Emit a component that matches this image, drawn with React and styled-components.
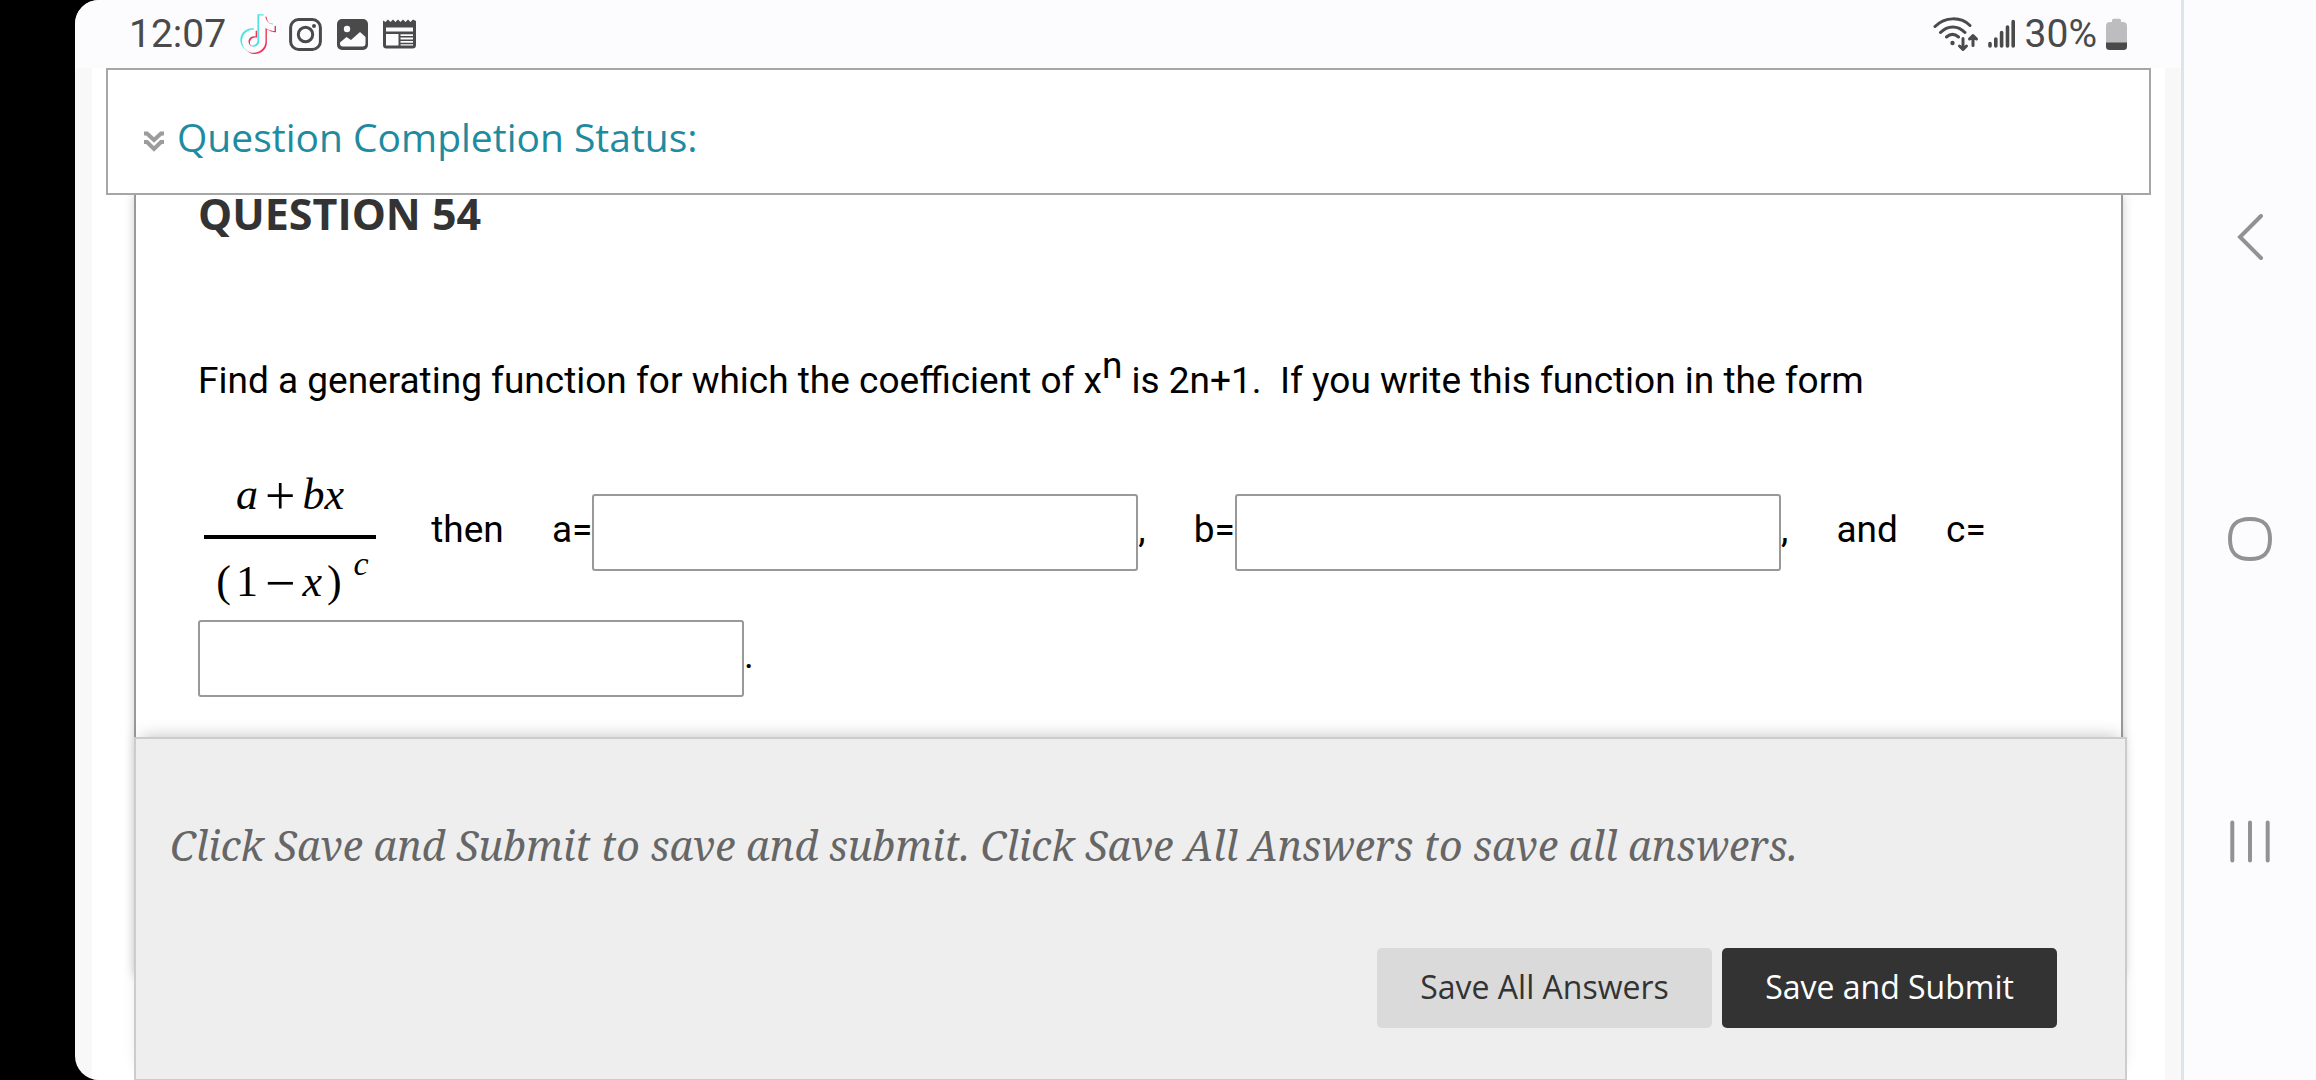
import React from "react";
import styled, { createGlobalStyle } from "styled-components";

const GlobalStyle = createGlobalStyle`
  *, *::before, *::after { box-sizing: border-box; }
  html, body { margin: 0; background: #000; }
  body { font-family: Roboto, "Liberation Sans", sans-serif; overflow: hidden; }
`;

const Device = styled.div`
  display: flex;
  height: 100vh;
  padding-left: 75px;
  background: #000;
  overflow: hidden;
`;

const Screen = styled.div`
  flex: 1;
  min-width: 0;
  display: flex;
  flex-direction: column;
  background: #f8f8f8;
  border-radius: 24px 0 0 24px;
  overflow: hidden;
`;

const StatusBar = styled.header`
  flex: none;
  display: flex;
  justify-content: space-between;
  align-items: center;
  height: 68px;
  padding: 0 54px;
  background: #fcfcff;
  color: #4a4a4a;
  font-size: 39px;
  line-height: 68px;
`;

const StatusGroup = styled.div`
  display: flex;
  align-items: center;
  gap: ${(p) => p.$gap}px;
`;

const Page = styled.main`
  flex: 1;
  min-height: 0;
  margin: 0 16px 0 17px;
  padding: 0 14px;
  background: #fff;
`;

const CompletionPanel = styled.section`
  position: relative;
  z-index: 1;
  display: flex;
  align-items: center;
  gap: 13px;
  height: 127px;
  padding: 10px 36px 0;
  background: #fff;
  border: 2px solid #a6a6a6;
`;

const CompletionLink = styled.a`
  color: #1f8ba0;
  font: 39px/54px "Open Sans", "Noto Sans", sans-serif;
  text-decoration: none;
`;

const QuestionCard = styled.section`
  height: 780px;
  margin: 0 28px;
  padding: 0 62px;
  background: #fff;
  border: solid #999;
  border-width: 0 2px;
  box-shadow: 0 0 10px rgba(0, 0, 0, 0.2);
`;

const QuestionTitle = styled.h1`
  margin: 0;
  color: #333;
  font: bold 43px/38px "Open Sans", "Noto Sans", sans-serif;
`;

const Prompt = styled.p`
  margin: 118px 0 0;
  color: #000;
  font-size: 37px;
  line-height: 60px;

  sup {
    font-size: 37px;
    line-height: 0;
    vertical-align: 15px;
  }
`;

const AnswerLine = styled.div`
  margin-top: 33px;
  font-size: 37px;
  line-height: 42px;
`;

const Word = styled.span`
  margin-right: 39px;
`;

const AnswerInput = styled.input`
  width: 546px;
  height: 77px;
  margin: 0;
  padding: 0 12px;
  background: #fff;
  border: 2px solid #999;
  border-radius: 3px;
  font: 28px Roboto, "Liberation Sans", sans-serif;
`;

const Fraction = styled.span`
  display: inline-flex;
  flex-direction: column;
  align-items: stretch;
  width: 172px;
  margin: 27px 46px 14px 6px;
  vertical-align: middle;
  font: 44px/48px "Liberation Serif", serif;
  text-align: center;
`;

const Numerator = styled.span`
  padding-bottom: 16px;
  border-bottom: 4px solid #000;
`;

const Denominator = styled.span`
  padding-top: 19px;

  sup {
    margin-left: 7px;
    font-size: 34px;
    line-height: 0;
    vertical-align: 21px;
  }
`;

const Operator = styled.span`
  margin: 0 7px;
  font-size: 54px;
  line-height: 0;
  vertical-align: -5px;
`;

const Group = styled.span`
  display: inline-block;
  padding: 0 5px;

  &::before {
    content: "(";
    margin-right: 5px;
  }

  &::after {
    content: ")";
    margin-left: 5px;
  }
`;

const SubmitPanel = styled.footer`
  position: relative;
  height: 344px;
  margin: -238px 24px 0 28px;
  padding: 78px 68px 0 34px;
  background: #eee;
  border: 2px solid #ccc;
  box-shadow: 0 -8px 16px -8px rgba(0, 0, 0, 0.25);
`;

const Hint = styled.p`
  margin: 0;
  color: #666;
  font: italic 41px/56px "Noto Serif", "DejaVu Serif Condensed", "DejaVu Serif", serif;
  white-space: nowrap;
`;

const Actions = styled.div`
  display: flex;
  justify-content: flex-end;
  gap: 10px;
  margin-top: 75px;
`;

const ActionButton = styled.button`
  width: 335px;
  height: 80px;
  padding: 0 0 4px;
  border: 0;
  border-radius: 5px;
  background: ${(p) => (p.$primary ? "#333" : "#dadada")};
  color: ${(p) => (p.$primary ? "#fff" : "#333")};
  font: 32px "Open Sans", "Noto Sans", sans-serif;
`;

const NavBar = styled.nav`
  flex: none;
  display: flex;
  flex-direction: column;
  width: 135px;
  padding: 86px 0 88px;
  background: #fcfcff;
  border-left: 3px solid #dde4ea;
`;

const NavButton = styled.button`
  flex: 1;
  display: flex;
  align-items: center;
  justify-content: center;
  padding: 0;
  background: none;
  border: 0;
`;

const NOTE =
  "M12.525.02c1.31-.02 2.61-.01 3.91-.02.08 1.53.63 3.09 1.75 4.17 1.12 1.11 2.7 1.62 4.24 1.79v4.03c-1.44-.05-2.89-.35-4.2-.97-.57-.26-1.1-.59-1.62-.93-.01 2.92.01 5.84-.02 8.75-.08 1.4-.54 2.79-1.35 3.94-1.31 1.92-3.58 3.17-5.91 3.21-1.43.08-2.86-.31-4.08-1.03-2.02-1.19-3.44-3.37-3.65-5.71-.02-.5-.03-1-.01-1.49.18-1.9 1.12-3.72 2.58-4.96 1.66-1.44 3.98-2.13 6.15-1.72.02 1.48-.04 2.96-.04 4.44-.99-.32-2.15-.23-3.02.37-.63.41-1.11 1.04-1.36 1.75-.21.51-.15 1.07-.14 1.61.24 1.64 1.82 3.02 3.5 2.87 1.12-.01 2.19-.66 2.77-1.61.19-.33.4-.67.41-1.06.1-1.79.06-3.57.07-5.36.01-4.03-.01-8.05.02-12.07z";

const TikTokIcon = () => (
  <svg width="33" height="40" viewBox="0 0 33 40" overflow="visible" aria-hidden="true">
    <g transform="scale(1.56)">
      <path d={NOTE} fill="#4fe3e3" transform="translate(-2 0.1)" />
      <path d={NOTE} fill="#e8365a" transform="translate(0 1.7)" />
      <path d={NOTE} fill="#fcfcff" transform="translate(-0.9 0.9)" />
    </g>
  </svg>
);

const InstagramIcon = () => (
  <svg width="33" height="33" viewBox="0 0 33 33" fill="none" stroke="#4a4a4a" aria-hidden="true">
    <rect x="1.6" y="1.6" width="29.8" height="29.8" rx="8" strokeWidth="3" />
    <circle cx="16.5" cy="16.5" r="7.2" strokeWidth="3" />
    <circle cx="25" cy="8" r="2" fill="#4a4a4a" stroke="none" />
  </svg>
);

const PictureIcon = () => (
  <svg width="31" height="31" viewBox="0 0 31 31" aria-hidden="true">
    <rect width="31" height="31" rx="5" fill="#4a4a4a" />
    <circle cx="10" cy="10" r="3.2" fill="#fcfcff" />
    <path d="M3 23.5 9.5 18 14 21l9-8 5.500 5v6.500a3 3 0 0 1-3 3h-19.500a3 3 0 0 1-3-3z" fill="#fcfcff" />
  </svg>
);

const NewsIcon = () => (
  <svg width="33" height="30" viewBox="0 0 33 30" aria-hidden="true">
    <path
      d="M0 1.500 2.500 3 5 .5 7.500 3 10 .5 12.500 3 15 .5 17.500 3 20 .5 22.500 3 25 .5 27.500 3 30 .5 33 2V26a3.500 3.500 0 0 1-3.500 3.500h-26A3.500 3.500 0 0 1 0 26z"
      fill="#4a4a4a"
    />
    <path d="M3 8.500h27v4H3zM3 15h12.500v11.500H3zM17.500 15.200h12.500v1.800h-12.500zM17.500 18.600h12.500v1.800h-12.500zM17.500 22h12.500v1.800h-12.500zM17.500 25.200h12.500v1.300h-12.500z" fill="#fcfcff" />
  </svg>
);

const WifiIcon = () => (
  <svg width="46" height="36" viewBox="0 0 46 36" fill="none" stroke="#4a4a4a" strokeWidth="3" strokeLinecap="round" strokeLinejoin="round" aria-hidden="true">
    <path d="M2 10.500C12 .5 28 .5 37 9.500M7.500 16.500c7-7.500 17.500-7.500 24.500 0M13.500 21c4-3.500 8-3.500 12 0" />
    <circle cx="19.500" cy="27" r="2.200" fill="#4a4a4a" stroke="none" />
    <path d="M30 22.500v10.500M26.500 30l3.500 3.500 3.500-3.500M40 29.500V19.500M36.500 23l3.500-3.500 3.500 3.500" />
  </svg>
);

const SignalIcon = () => (
  <svg width="28" height="30" viewBox="0 0 28 30" stroke="#4a4a4a" strokeWidth="3.600" strokeLinecap="round" aria-hidden="true">
    <path d="M2 24.500V27M7.800 20v7M13.600 13.500V27M19.500 8v19M25.200 2.500V27" />
  </svg>
);

const BatteryIcon = () => (
  <svg width="21" height="32" viewBox="0 0 21 32" aria-hidden="true">
    <path d="M6 4V2.200A1.500 1.500 0 0 1 7.500 .7h6A1.500 1.500 0 0 1 15 2.200V4h2a4 4 0 0 1 4 4v17H0V8a4 4 0 0 1 4-4z" fill="#bdbdbf" />
    <path d="M0 24.500h21V28.500a3.500 3.500 0 0 1-3.500 3.500h-14A3.500 3.500 0 0 1 0 28.500z" fill="#4a4a4a" />
  </svg>
);

const ExpandIcon = () => (
  <svg width="20" height="30" viewBox="0 -10 20 30" fill="none" stroke="#9c9c9c" strokeWidth="4" aria-hidden="true">
    <path d="M0 1.500h3l7 6.500 7-6.500h3M0 10h3l7 7 7-7h3" />
  </svg>
);

const BackIcon = () => (
  <svg width="28" height="46" viewBox="0 0 28 46" fill="none" stroke="#929294" strokeWidth="4" strokeLinecap="round" strokeLinejoin="miter" aria-hidden="true">
    <path d="M25 2 4 23l21 21" />
  </svg>
);

const HomeIcon = () => (
  <svg width="44" height="44" viewBox="0 0 44 44" fill="none" stroke="#929294" strokeWidth="4" aria-hidden="true">
    <path d="M22 2C36 2 42 8 42 22S36 42 22 42 2 36 2 22 8 2 22 2z" />
  </svg>
);

const RecentsIcon = () => (
  <svg width="40" height="43" viewBox="0 0 40 43" stroke="#929294" strokeWidth="4" strokeLinecap="round" aria-hidden="true">
    <path d="M2.300 2.500v38M20 2.500v38M37.700 2.500v38" />
  </svg>
);

export default function App() {
  return (
    <>
      <GlobalStyle />
      <Device>
        <Screen>
          <StatusBar>
            <StatusGroup $gap={15}>
              <time>12:07</time>
              <TikTokIcon />
              <InstagramIcon />
              <PictureIcon />
              <NewsIcon />
            </StatusGroup>
            <StatusGroup $gap={9}>
              <WifiIcon />
              <SignalIcon />
              <span>30%</span>
              <BatteryIcon />
            </StatusGroup>
          </StatusBar>
          <Page>
            <CompletionPanel>
              <ExpandIcon />
              <CompletionLink href="#status">Question Completion Status:</CompletionLink>
            </CompletionPanel>
            <QuestionCard>
              <QuestionTitle>QUESTION 54</QuestionTitle>
              <Prompt>
                Find a generating function for which the coefficient of x<sup>n</sup> is 2n+1.&nbsp; If you write this
                function in the form
              </Prompt>
              <AnswerLine>
                <Fraction>
                  <Numerator>
                    <i>a</i>
                    <Operator>+</Operator>
                    <i>bx</i>
                  </Numerator>
                  <Denominator>
                    <Group>
                      1<Operator>−</Operator>
                      <i>x</i>
                    </Group>
                    <sup>
                      <i>c</i>
                    </sup>
                  </Denominator>
                </Fraction>{" "}
                <Word>then</Word> <label htmlFor="answer-a">a=</label>
                <AnswerInput id="answer-a" type="text" />
                <Word>,</Word> <label htmlFor="answer-b">b=</label>
                <AnswerInput id="answer-b" type="text" />
                <Word>,</Word> <Word>and</Word> <label htmlFor="answer-c">c=</label>
                <AnswerInput id="answer-c" type="text" />.
              </AnswerLine>
            </QuestionCard>
            <SubmitPanel>
              <Hint>Click Save and Submit to save and submit. Click Save All Answers to save all answers.</Hint>
              <Actions>
                <ActionButton type="button">Save All Answers</ActionButton>
                <ActionButton type="submit" $primary>
                  Save and Submit
                </ActionButton>
              </Actions>
            </SubmitPanel>
          </Page>
        </Screen>
        <NavBar aria-label="System">
          <NavButton type="button" aria-label="Back">
            <BackIcon />
          </NavButton>
          <NavButton type="button" aria-label="Home">
            <HomeIcon />
          </NavButton>
          <NavButton type="button" aria-label="Recent apps">
            <RecentsIcon />
          </NavButton>
        </NavBar>
      </Device>
    </>
  );
}
